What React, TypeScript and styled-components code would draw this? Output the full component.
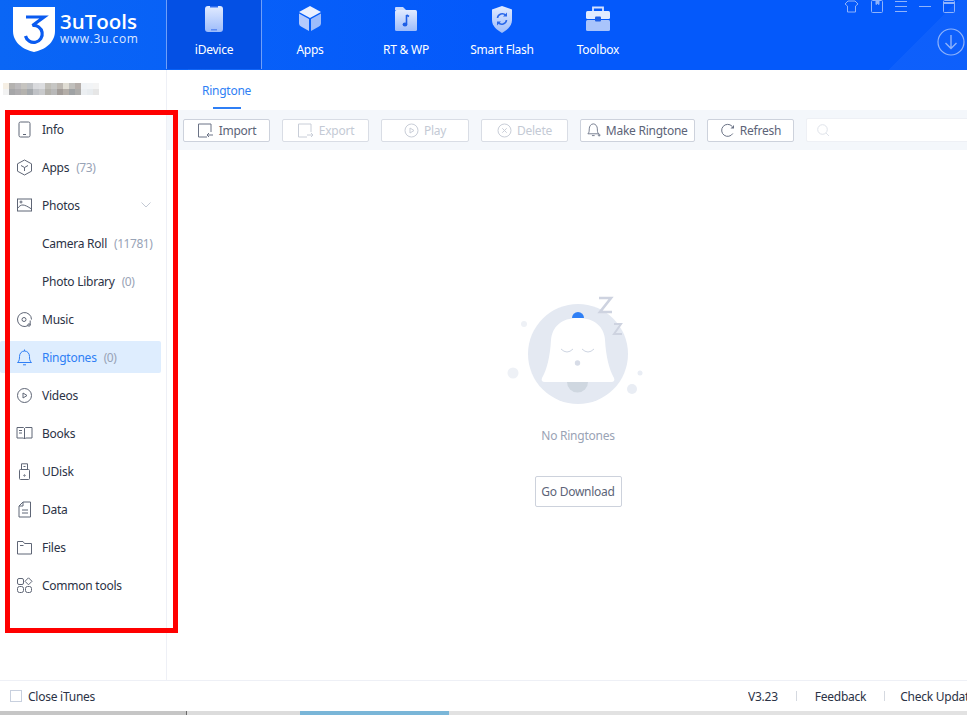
import React from 'react'
import styled, { createGlobalStyle } from 'styled-components'

const GlobalStyle = createGlobalStyle`
  html, body {
    margin: 0;
    padding: 0;
    overflow: hidden;
    background: #fff;
  }
  body {
    font-family: "Noto Sans", "Open Sans", sans-serif;
    font-size: 12px;
    letter-spacing: -0.25px;
    color: #2b3245;
  }
`

const Page = styled.div`
  width: 967px;
  height: 715px;
  display: flex;
  flex-direction: column;
  overflow: hidden;
  position: relative;
`

const Header = styled.header`
  height: 70px;
  flex: none;
  display: flex;
  position: relative;
  overflow: hidden;
  background: linear-gradient(90deg, #0a66f5 0%, #0459fb 50%, #0459fb 100%);
`

const HeaderSheen = styled.div`
  position: absolute;
  inset: 0;
  background:
    linear-gradient(135deg, transparent 0 78%, rgba(255, 255, 255, 0.04) 78% 100%) 0 0 / 260px 70px no-repeat,
    linear-gradient(135deg, transparent 0 60%, rgba(255, 255, 255, 0.04) 60% 100%) 840px 0 / 127px 70px no-repeat;
`

const LogoBlock = styled.div`
  width: 166px;
  flex: none;
  display: flex;
  gap: 5px;
  padding: 7px 0 0 13px;
  box-sizing: border-box;
  position: relative;
`

const LogoText = styled.div`
  color: #fff;
  display: flex;
  flex-direction: column;
`

const LogoName = styled.div`
  font-family: "Open Sans", sans-serif;
  font-size: 20.5px;
  font-weight: 600;
  line-height: 20px;
  margin-top: 4px;
  letter-spacing: 0;
`

const LogoUrl = styled.div`
  font-family: "Open Sans", sans-serif;
  font-size: 12px;
  line-height: 15px;
  color: #dfe9ff;
  letter-spacing: 0.6px;
`

const NavList = styled.nav`
  display: flex;
  position: relative;
`

const NavItem = styled.div<{ $active?: boolean; $w: number }>`
  width: ${p => p.$w}px;
  height: 69px;
  display: flex;
  flex-direction: column;
  align-items: center;
  color: #fff;
  box-sizing: border-box;
  padding-top: 5px;
  background: ${p => (p.$active ? '#0450e4' : 'transparent')};
  border-left: ${p => (p.$active ? '1px solid #6f9ff8' : 'none')};
  border-right: ${p => (p.$active ? '1px solid #6f9ff8' : 'none')};
  svg {
    display: block;
    height: 30px;
  }
`

const NavLabel = styled.span`
  margin-top: 6px;
  line-height: 18px;
`

const WindowControls = styled.div`
  position: absolute;
  top: 0;
  right: 0;
  width: 126px;
  height: 70px;
  display: flex;
  flex-direction: column;
  align-items: flex-end;
`

const ControlRow = styled.div`
  display: flex;
  gap: 12px;
  width: 126px;
  height: 14px;
  padding-left: 3px;
  box-sizing: border-box;
`

const DownloadButton = styled.div`
  margin: 14px 2px 0 0;
  svg {
    display: block;
  }
`

const Body = styled.div`
  flex: 1;
  min-height: 0;
  display: flex;
`

const Sidebar = styled.aside`
  width: 167px;
  flex: none;
  border-right: 1px solid #eef0f6;
  box-sizing: border-box;
  display: flex;
  flex-direction: column;
`

const DeviceName = styled.div`
  height: 43px;
  flex: none;
  padding: 13px 0 0 3px;
  box-sizing: border-box;
`

const BlurCells = styled.div`
  display: grid;
  grid-template-columns: repeat(16, 6px);
  grid-auto-rows: 6px;
  width: 96px;
`

const BlurCell = styled.span<{ $c: string }>`
  background: ${p => p.$c};
`

const SideList = styled.ul`
  list-style: none;
  margin: 0;
  padding: 0 5px 0 0;
`

const SideRow = styled.li<{ $active?: boolean }>`
  height: 32px;
  margin-bottom: 6px;
  display: flex;
  align-items: center;
  padding-left: 16px;
  border-radius: 2px;
  color: ${p => (p.$active ? '#2f7ff5' : '#2b3245')};
  background: ${p => (p.$active ? '#deedfe' : 'transparent')};
  position: relative;
`

const SideIcon = styled.span`
  width: 17px;
  height: 17px;
  margin-right: 9px;
  flex: none;
  svg {
    display: block;
  }
`

const SideIndent = styled.span`
  width: 26px;
  flex: none;
`

const SideLabel = styled.span`
  margin-top: 1px;
`

const Count = styled.span`
  color: #98a3b6;
  margin-left: 7px;
  letter-spacing: -0.45px;
`

const Chevron = styled.span`
  position: absolute;
  left: 141px;
  top: 13px;
  svg {
    display: block;
  }
`

const Main = styled.main`
  flex: 1;
  min-width: 0;
  display: flex;
  flex-direction: column;
`

const TabBar = styled.div`
  height: 40px;
  flex: none;
  padding-left: 32px;
`

const Tab = styled.div`
  display: inline-block;
  height: 39px;
  box-sizing: border-box;
  padding: 12px 3px 0;
  line-height: 18px;
  color: #2f7ff5;
  position: relative;
  &::after {
    content: '';
    position: absolute;
    left: 14px;
    bottom: 0;
    width: 28px;
    height: 2px;
    background: #2f7ff5;
  }
`

const Toolbar = styled.div`
  height: 40px;
  flex: none;
  background: #f4f7fb;
  display: flex;
  align-items: center;
  gap: 12px;
  padding-left: 16px;
`

const ToolButton = styled.button<{ $w: number; $off?: boolean }>`
  width: ${p => p.$w}px;
  height: 23px;
  padding: 0;
  display: flex;
  align-items: center;
  justify-content: center;
  gap: 5px;
  font: inherit;
  letter-spacing: inherit;
  color: ${p => (p.$off ? '#c4cad5' : '#5c6478')};
  background: #fff;
  border: 1px solid ${p => (p.$off ? '#d9dde5' : '#cdd2dc')};
  border-radius: 2px;
  svg {
    display: block;
  }
`

const ToolLabel = styled.span`
  margin-top: 1px;
`

const SearchBox = styled.div`
  flex: 1;
  height: 22px;
  background: #fff;
  border: 1px solid #eef0f5;
  border-radius: 2px;
  margin-right: -4px;
  padding-left: 10px;
  display: flex;
  align-items: center;
  svg {
    display: block;
  }
`

const Empty = styled.div`
  flex: 1;
  display: flex;
  flex-direction: column;
  align-items: center;
  padding-top: 145px;
  padding-left: 22px;
`

const EmptyArt = styled.svg`
  display: block;
  flex: none;
`

const EmptyText = styled.div`
  margin-top: 17px;
  color: #9aa3b5;
  line-height: 18px;
`

const DownloadLink = styled.button`
  margin-top: 31px;
  width: 87px;
  height: 31px;
  padding: 0;
  font: inherit;
  letter-spacing: inherit;
  color: #5c6478;
  background: #fff;
  border: 1px solid #cdd2dc;
  border-radius: 2px;
`

const Footer = styled.footer`
  height: 31px;
  flex: none;
  border-top: 1px solid #eef0f6;
  box-sizing: border-box;
  display: flex;
  align-items: center;
  padding-left: 10px;
  white-space: nowrap;
`

const CheckBox = styled.span`
  width: 10px;
  height: 10px;
  border: 1px solid #c8d0de;
  margin-right: 6px;
  flex: none;
`

const FooterRight = styled.div`
  margin-left: auto;
  display: flex;
  align-items: center;
  width: 219px;
  overflow: hidden;
`

const FooterSep = styled.span<{ $after?: number }>`
  width: 1px;
  height: 10px;
  background: #d5d9e0;
  margin: 0 ${p => p.$after ?? 18}px 0 18px;
  flex: none;
`

const BottomEdge = styled.div`
  height: 4px;
  flex: none;
  display: flex;
  background: #e2e2e2;
`

const EdgePart = styled.span<{ $w: number; $c: string }>`
  width: ${p => p.$w}px;
  flex: none;
  background: ${p => p.$c};
`

const Annotation = styled.div`
  position: absolute;
  left: 5px;
  top: 110px;
  width: 173px;
  height: 523px;
  box-sizing: border-box;
  border: 5px solid #ff0000;
  pointer-events: none;
`

const stroke = { fill: 'none', stroke: '#5f6676', strokeWidth: 1 }

const icons: Record<string, React.ReactNode> = {
  info: (
    <svg width="17" height="17" viewBox="0 0 17 17" {...stroke}>
      <rect x="3" y="1" width="11" height="15" rx="1.5" />
      <path d="M7 13.5h3" />
    </svg>
  ),
  apps: (
    <svg width="17" height="17" viewBox="0 0 17 17" {...stroke}>
      <path d="M8.5 1L15.5 4.8V12.2L8.5 16L1.5 12.2V4.8Z" />
      <path d="M5 6.5L8.5 8.5L12 6.5M8.5 8.5V12" />
    </svg>
  ),
  photos: (
    <svg width="17" height="17" viewBox="0 0 17 17" {...stroke}>
      <rect x="1.5" y="2" width="14" height="12" />
      <circle cx="5" cy="5" r="1" />
      <path d="M1.5 11.5C5 6.5 8 7 15.5 12" />
    </svg>
  ),
  music: (
    <svg width="17" height="17" viewBox="0 0 17 17" {...stroke}>
      <path d="M12 14.6A7 7 0 1 1 15.5 8.5" />
      <circle cx="8" cy="8.5" r="2" />
      <circle cx="13" cy="14" r="1.2" />
      <path d="M14.2 14V9.5" />
    </svg>
  ),
  ringtones: (
    <svg width="17" height="17" viewBox="0 0 17 17" fill="none" stroke="#2f7ff5">
      <path d="M1.5 13.5C3.5 12 3.5 9.5 3.5 7.5C3.5 4.5 5.5 2 8.5 2C11.5 2 13.5 4.5 13.5 7.5C13.5 9.5 13.5 12 15.5 13.5Z" />
      <path d="M7 15.8h3M8.5 0.5V2" />
    </svg>
  ),
  videos: (
    <svg width="17" height="17" viewBox="0 0 17 17" {...stroke}>
      <circle cx="8.5" cy="8.5" r="7" />
      <path d="M7 6L11 8.5L7 11Z" />
    </svg>
  ),
  books: (
    <svg width="17" height="17" viewBox="0 0 17 17" {...stroke}>
      <path d="M8.5 3.5L7.5 2.5H1V13H7.5L8.5 14L9.5 13H16V2.5H9.5Z" />
      <path d="M8.5 3.5V14M3 5.5H6M3 8H6" />
    </svg>
  ),
  udisk: (
    <svg width="17" height="17" viewBox="0 0 17 17" {...stroke}>
      <rect x="3.5" y="6.5" width="10" height="10" rx="1" />
      <path d="M5.5 6.5V0.8H11.5V6.5M7.5 3.5H9.5" />
      <circle cx="8.5" cy="12.5" r="0.7" />
    </svg>
  ),
  data: (
    <svg width="17" height="17" viewBox="0 0 17 17" {...stroke}>
      <path d="M7 1H14.5V16H3V5Z" />
      <path d="M7 1V5H3M6 9H12M6 12H12" />
    </svg>
  ),
  files: (
    <svg width="17" height="17" viewBox="0 0 17 17" {...stroke}>
      <path d="M1.5 2.5H7L8.5 4.5H15.5V15H1.5Z" />
      <path d="M4 6.5H7.5" />
    </svg>
  ),
  tools: (
    <svg width="17" height="17" viewBox="0 0 17 17" {...stroke}>
      <rect x="1.5" y="1.5" width="6" height="6" rx="1.5" />
      <rect x="1.5" y="9.5" width="6" height="6" rx="2" />
      <rect x="9.5" y="9.5" width="6" height="6" rx="2" />
      <path d="M12.5 0.8L16 4.3L12.5 7.8L9 4.3Z" />
    </svg>
  ),
}

const NavGradient = () => (
  <defs>
    <linearGradient id="navFill" x1="0" y1="0" x2="0" y2="1">
      <stop offset="0" stopColor="#e2ebff" />
      <stop offset="1" stopColor="#9dbcfb" />
    </linearGradient>
  </defs>
)

const navItems: { label: string; w: number; active?: boolean; icon: React.ReactNode }[] = [
  {
    label: 'iDevice',
    w: 96,
    active: true,
    icon: (
      <svg width="20" height="30" viewBox="0 0 20 30">
        <NavGradient />
        <rect x="1" y="1" width="18" height="26" rx="3" fill="url(#navFill)" />
        <rect x="6" y="1" width="8" height="1.5" fill="#2f6cf0" />
        <rect x="7" y="24" width="6" height="1.5" fill="#5f8cf2" />
      </svg>
    ),
  },
  {
    label: 'Apps',
    w: 96,
    icon: (
      <svg width="26" height="30" viewBox="0 0 26 30">
        <path d="M13 1L24 7L13 13L2 7Z" fill="#eaf0ff" />
        <path d="M2 8.5L12 14V26L4 21.5Q2 20.5 2 18.5Z" fill="#b4cafd" />
        <path d="M24 8.5L14 14V26L22 21.5Q24 20.5 24 18.5Z" fill="#9dbcfb" />
      </svg>
    ),
  },
  {
    label: 'RT & WP',
    w: 96,
    icon: (
      <svg width="24" height="30" viewBox="0 0 24 30">
        <path d="M1 3Q1 2 2 2H9L12 5H1Z" fill="#c9d9fd" />
        <rect x="1" y="5" width="22" height="21" rx="1.5" fill="url(#navFill)" />
        <path d="M12.5 10V19" stroke="#1e5fe6" strokeWidth="1.6" fill="none" />
        <path d="M12.5 10L15 11.5" stroke="#1e5fe6" strokeWidth="1.6" fill="none" />
        <ellipse cx="11" cy="19.5" rx="2.4" ry="2" fill="#1e5fe6" />
      </svg>
    ),
  },
  {
    label: 'Smart Flash',
    w: 96,
    icon: (
      <svg width="24" height="30" viewBox="0 0 24 30">
        <path d="M12 1L22 4.5V15C22 21 17 25 12 28C7 25 2 21 2 15V4.5Z" fill="url(#navFill)" />
        <path d="M7.5 13A4.7 4.7 0 0 1 15.8 10.5M16.5 15A4.7 4.7 0 0 1 8.2 17.5" stroke="#2a68ea" strokeWidth="1.6" fill="none" />
        <path d="M17 7.5V11.5H13ZM7 20.5V16.5H11Z" fill="#2a68ea" />
      </svg>
    ),
  },
  {
    label: 'Toolbox',
    w: 96,
    icon: (
      <svg width="26" height="30" viewBox="0 0 26 30">
        <path d="M8 6V2.5H18V6" stroke="#d5e1fe" strokeWidth="1.8" fill="none" />
        <rect x="1" y="6" width="24" height="8" rx="1.5" fill="#e2ebff" />
        <rect x="1" y="15" width="24" height="11" rx="1.5" fill="#a9c4fb" />
        <rect x="10" y="11.5" width="6" height="5" rx="1" fill="#1e5fe6" />
      </svg>
    ),
  },
]

const sideRows: { key: string; label: string; count?: string; sub?: boolean; open?: boolean; active?: boolean }[] = [
  { key: 'info', label: 'Info' },
  { key: 'apps', label: 'Apps', count: '(73)' },
  { key: 'photos', label: 'Photos', open: true },
  { key: 'camera', label: 'Camera Roll', count: '(11781)', sub: true },
  { key: 'library', label: 'Photo Library', count: '(0)', sub: true },
  { key: 'music', label: 'Music' },
  { key: 'ringtones', label: 'Ringtones', count: '(0)', active: true },
  { key: 'videos', label: 'Videos' },
  { key: 'books', label: 'Books' },
  { key: 'udisk', label: 'UDisk' },
  { key: 'data', label: 'Data' },
  { key: 'files', label: 'Files' },
  { key: 'tools', label: 'Common tools' },
]

const blurColors = [
  '#f6efe4', '#b4b2b0', '#bcbabc', '#c6c4c0', '#bfc1c4', '#d9dadd', '#dcdde0', '#c0beb8',
  '#c6c6c4', '#bdb8b2', '#e0ddd4', '#c0bfbc', '#b5aeaa', '#f0f3f6', '#f2f4f6', '#f4f4f4',
  '#f2f2f2', '#a6a6a8', '#aeacae', '#b4b2ae', '#a4a8ac', '#c0c2c6', '#c9cacc', '#b2b0aa',
  '#b8b8b8', '#a29c98', '#b4aea8', '#9fa2a4', '#adacaa', '#eceff2', '#e8ecef', '#e6e6e6',
]

const ctl = '#8fb3fb'

const ToolIcon: React.FC<{ kind: string; color: string }> = ({ kind, color }) => {
  const s = { fill: 'none', stroke: color, strokeWidth: 1 }
  if (kind === 'import' || kind === 'export')
    return (
      <svg width="17" height="15" viewBox="0 0 17 15" {...s}>
        <path d="M10 14H1.5V1H14V9" />
        {kind === 'import' ? <path d="M16 12H10M12 10L10 12L12 14" /> : <path d="M10 12H16M14 10L16 12L14 14" />}
      </svg>
    )
  if (kind === 'play')
    return (
      <svg width="15" height="15" viewBox="0 0 15 15" {...s}>
        <circle cx="7.5" cy="7.5" r="6.5" />
        <path d="M6 5L10 7.5L6 10Z" />
      </svg>
    )
  if (kind === 'delete')
    return (
      <svg width="15" height="15" viewBox="0 0 15 15" {...s}>
        <circle cx="7.5" cy="7.5" r="6.5" />
        <path d="M5.3 5.3L9.7 9.7M9.7 5.3L5.3 9.7" />
      </svg>
    )
  if (kind === 'bell')
    return (
      <svg width="13.5" height="13.5" viewBox="0 0 15 15" {...s}>
        <path d="M1 12C2.5 11 2.5 8 2.5 6.5C2.5 3.5 4.5 1 7 1C9.5 1 11.5 3.5 11.5 6.5C11.5 8 11.5 11 13 12Z" />
        <path d="M5.5 14H8.5M12 13.5H15M13.5 12V15" />
      </svg>
    )
  return (
    <svg width="15" height="15" viewBox="0 0 15 15" {...s}>
      <path d="M12.8 10.5A6 6 0 1 1 12 3.2" />
      <path d="M10.5 5.5H14V2Z" fill={color} stroke="none" />
    </svg>
  )
}

const tools: { label: string; kind: string; w: number; off?: boolean }[] = [
  { label: 'Import', kind: 'import', w: 87 },
  { label: 'Export', kind: 'export', w: 87, off: true },
  { label: 'Play', kind: 'play', w: 88, off: true },
  { label: 'Delete', kind: 'delete', w: 87, off: true },
  { label: 'Make Ringtone', kind: 'bell', w: 115 },
  { label: 'Refresh', kind: 'refresh', w: 87 },
]

const App: React.FC = () => {
  return (
    <Page>
      <GlobalStyle />
      <Header>
        <HeaderSheen />
        <LogoBlock>
          <svg width="42" height="45" viewBox="0 0 42 45">
            <path d="M0 0H42V24C42 36 31 43 21 45C11 43 0 36 0 24Z" fill="#fff" />
            <path
              d="M13 10H31L19.5 18.5A8.5 8.5 0 1 1 12.5 29"
              fill="none"
              stroke="#0a5bf0"
              strokeWidth="3.2"
            />
          </svg>
          <LogoText>
            <LogoName>3uTools</LogoName>
            <LogoUrl>www.3u.com</LogoUrl>
          </LogoText>
        </LogoBlock>
        <NavList>
          {navItems.map(item => (
            <NavItem key={item.label} $active={item.active} $w={item.w}>
              {item.icon}
              <NavLabel>{item.label}</NavLabel>
            </NavItem>
          ))}
        </NavList>
        <WindowControls>
          <ControlRow>
            <svg width="15" height="13" viewBox="0 0 15 13" fill="none" stroke={ctl}>
              <path d="M4 1H11L14 4L11.5 6V12H3.5V6L1 4Z" />
            </svg>
            <svg width="12" height="13" viewBox="0 0 12 13" fill="none" stroke={ctl}>
              <rect x="0.5" y="0.5" width="11" height="12" rx="1" />
              <path d="M5 0.5V4.5L6.5 3.5L8 4.5V0.5" fill={ctl} />
            </svg>
            <svg width="12" height="13" viewBox="0 0 12 13" fill="none" stroke={ctl}>
              <path d="M0 1.5H12M0 6.5H12M0 11.5H12" />
            </svg>
            <svg width="12" height="13" viewBox="0 0 12 13" fill="none" stroke={ctl}>
              <path d="M0 6.5H12" />
            </svg>
            <svg width="12" height="13" viewBox="0 0 12 13" fill="none" stroke={ctl}>
              <rect x="0.5" y="0.5" width="11" height="12" rx="1" />
              <path d="M0.5 3H11.5" strokeWidth="2" />
            </svg>
          </ControlRow>
          <DownloadButton>
            <svg width="28" height="28" viewBox="0 0 28 28" fill="none" stroke={ctl}>
              <circle cx="14" cy="14" r="13" strokeWidth="1.2" />
              <path d="M14 7V20M8.5 15L14 20.5L19.5 15" strokeWidth="1.4" />
            </svg>
          </DownloadButton>
        </WindowControls>
      </Header>
      <Body>
        <Sidebar>
          <DeviceName>
            <BlurCells>
              {blurColors.map((c, i) => (
                <BlurCell key={i} $c={c} />
              ))}
            </BlurCells>
          </DeviceName>
          <SideList>
            {sideRows.map(row => (
              <SideRow key={row.key} $active={row.active}>
                {row.sub ? <SideIndent /> : <SideIcon>{icons[row.key]}</SideIcon>}
                <SideLabel>
                  {row.label}
                  {row.count && <Count>{row.count}</Count>}
                </SideLabel>
                {row.open && (
                  <Chevron>
                    <svg width="10" height="6" viewBox="0 0 10 6" fill="none" stroke="#c3c9d4">
                      <path d="M0.5 0.5L5 5L9.5 0.5" />
                    </svg>
                  </Chevron>
                )}
              </SideRow>
            ))}
          </SideList>
        </Sidebar>
        <Main>
          <TabBar>
            <Tab>Ringtone</Tab>
          </TabBar>
          <Toolbar>
            {tools.map(t => (
              <ToolButton key={t.label} $w={t.w} $off={t.off}>
                <ToolIcon kind={t.kind} color={t.off ? '#c9ced8' : '#6b7386'} />
                <ToolLabel>{t.label}</ToolLabel>
              </ToolButton>
            ))}
            <SearchBox>
              <svg width="13" height="13" viewBox="0 0 13 13" fill="none" stroke="#dfe3ea">
                <circle cx="5.5" cy="5.5" r="4.8" />
                <path d="M9 9L12 12" />
              </svg>
            </SearchBox>
          </Toolbar>
          <Empty>
            <EmptyArt width="150" height="115" viewBox="0 0 150 115">
              <circle cx="75" cy="59" r="50" fill="#e4e9f2" />
              <circle cx="10" cy="78" r="5.5" fill="#eef1f6" />
              <circle cx="21" cy="29" r="3" fill="#eef1f6" />
              <circle cx="137" cy="78" r="2.5" fill="#e9edf4" />
              <circle cx="129" cy="94" r="5" fill="#e9edf4" />
              <path d="M64 87A10.5 10.5 0 0 0 85 87Z" fill="#cfd7e0" />
              <path d="M69 23A6 6 0 0 1 81 23Z" fill="#2f7ff5" />
              <path
                d="M75 23C92 23 101 32 102 45C103 62 106 74 111 83Q112.5 87 108 87H42Q37.5 87 39 83C44 74 47 62 48 45C49 32 58 23 75 23Z"
                fill="#fff"
              />
              <path d="M58 54Q64 60 70 54M79 54Q85 60 91 54" fill="none" stroke="#ced5e2" strokeWidth="1" />
              <circle cx="74.5" cy="68" r="2.7" fill="#d7dce7" />
              <path d="M96 3H108L97 17H109" fill="none" stroke="#ced3e0" strokeWidth="2.6" />
              <path d="M111 29H118L111 39H119" fill="none" stroke="#ced3e0" strokeWidth="2" />
            </EmptyArt>
            <EmptyText>No Ringtones</EmptyText>
            <DownloadLink>Go Download</DownloadLink>
          </Empty>
        </Main>
      </Body>
      <Footer>
        <CheckBox />
        Close iTunes
        <FooterRight>
          V3.23
          <FooterSep />
          Feedback
          <FooterSep $after={15} />
          Check Update
        </FooterRight>
      </Footer>
      <BottomEdge>
        <EdgePart $w={186} $c="#c6c6c6" />
        <EdgePart $w={1} $c="#6a6a6a" />
        <EdgePart $w={113} $c="#dcdcdc" />
        <EdgePart $w={149} $c="#7ab6d8" />
      </BottomEdge>
      <Annotation />
    </Page>
  )
}

export default App
